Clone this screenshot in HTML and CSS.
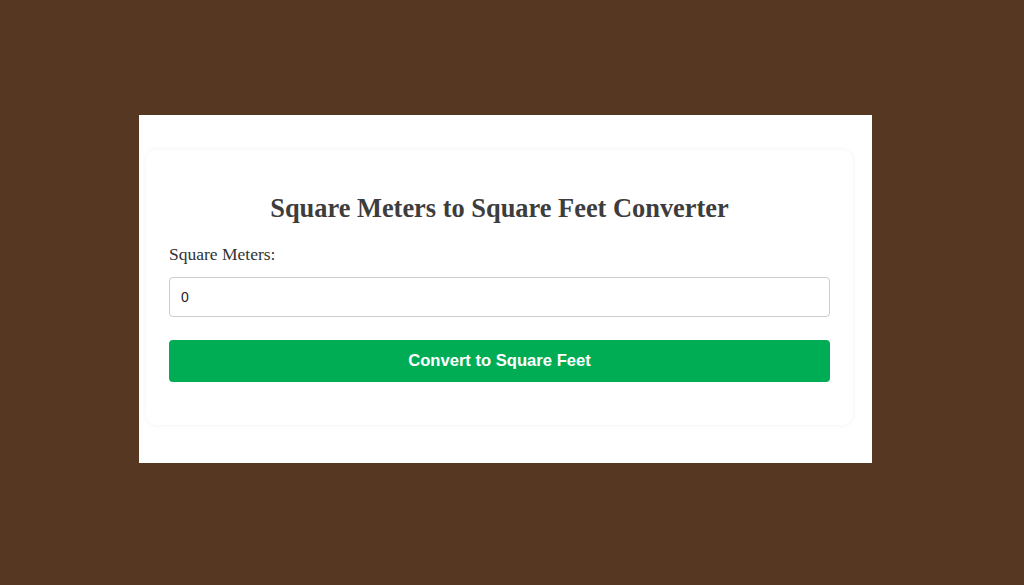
FILE: index.html
```html
<!DOCTYPE html>
<html lang="en">
<head>
  <meta charset="UTF-8">
  <meta name="viewport" content="width=device-width, initial-scale=1.0">
  <title>Square Meters to Square Feet Converter</title>
  <link rel="stylesheet" href="styles.css">
</head>
<body>
  <div class="frame">
    <div class="container">
      <h2>Square Meters to Square Feet Converter</h2>

      <label for="sqm">Square Meters:</label>
      <input type="number" id="sqm" value="0">

      <button id="convert-btn" class="button">Convert to Square Feet</button>

      <div id="result" class="result"></div>
    </div>
  </div>

  <script>
    // 1 m² = 10.7639 ft²
    document.getElementById('convert-btn').addEventListener('click', function() {
      const meters = parseFloat(document.getElementById('sqm').value) || 0;
      const feet = meters * 10.7639;
      document.getElementById('result').textContent = meters + ' m² = ' + feet.toFixed(2) + ' ft²';
    });
  </script>
</body>
</html>
```

FILE: styles.css
```css
body {
  font-family: 'Liberation Serif', 'Times New Roman', serif;
  background-color: #563721;
  color: #333;
  margin: 0;
  padding: 115px 0 0 139px;
  min-height: 100vh;
  box-sizing: border-box;
}

.frame {
  width: 733px;
  height: 348px;
  box-sizing: border-box;
  background-color: #ffffff;
  padding: 35px 19px 0 7px;
}

.container {
  height: 275px;
  box-sizing: border-box;
  padding: 43px 23px 0 23px;
  border-radius: 10px;
  box-shadow: 0 0 5px rgba(0, 0, 0, 0.06);
}

h2 {
  font-size: 26.4px;
  line-height: 30px;
  text-align: center;
  margin: 0 0 21px 0;
  color: #3d3d3d;
}

label {
  display: block;
  font-size: 17.5px;
  line-height: 20px;
  margin-bottom: 13px;
}

input {
  display: block;
  width: 100%;
  height: 40px;
  box-sizing: border-box;
  padding: 0 11px;
  font-family: 'Liberation Sans', Arial, sans-serif;
  font-size: 14px;
  color: #222;
  border: 1px solid #ccc;
  border-radius: 4px;
  margin-bottom: 23px;
  -moz-appearance: textfield;
}

input::-webkit-inner-spin-button,
input::-webkit-outer-spin-button {
  -webkit-appearance: none;
  margin: 0;
}

.button {
  display: block;
  width: 100%;
  height: 42px;
  background-color: #00ad55;
  color: #ffffff;
  border: none;
  border-radius: 4px;
  font-family: 'Liberation Sans', Arial, sans-serif;
  font-size: 16.6px;
  font-weight: bold;
  cursor: pointer;
}

.button:hover {
  background-color: #009a4b;
}

.result {
  margin-top: 12px;
  font-size: 16px;
  text-align: center;
}
```
